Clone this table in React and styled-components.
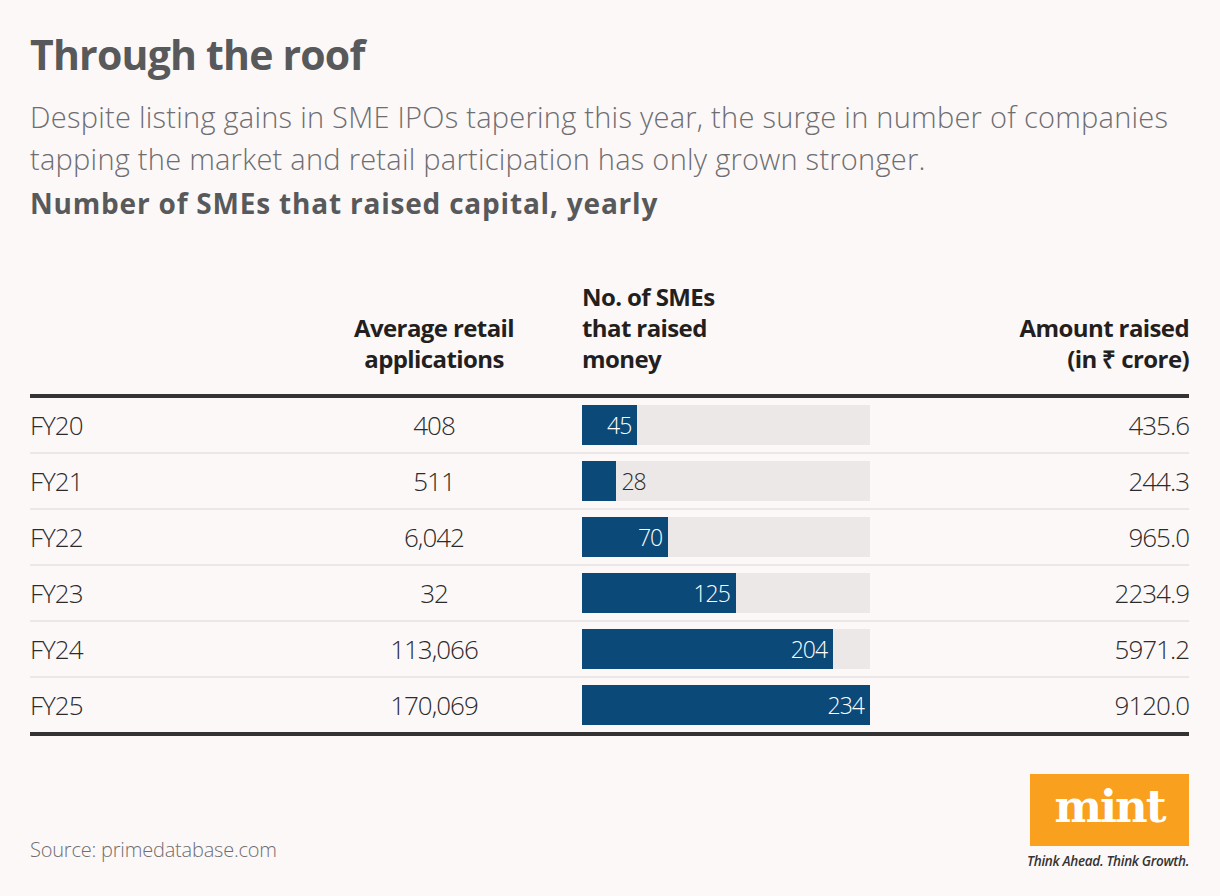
import React from "react";
import styled, { createGlobalStyle } from "styled-components";

const GlobalStyle = createGlobalStyle`
  html, body {
    margin: 0;
    padding: 0;
    background: #fdf8f8;
  }
  body {
    font-family: "Open Sans", "Liberation Sans", sans-serif;
  }
`;

const rows = [
  { year: "FY20", apps: "408", smes: 45, amount: "435.6" },
  { year: "FY21", apps: "511", smes: 28, amount: "244.3" },
  { year: "FY22", apps: "6,042", smes: 70, amount: "965.0" },
  { year: "FY23", apps: "32", smes: 125, amount: "2234.9" },
  { year: "FY24", apps: "113,066", smes: 204, amount: "5971.2" },
  { year: "FY25", apps: "170,069", smes: 234, amount: "9120.0" },
];

const MAX = 234;

const Page = styled.div`
  width: 1220px;
  height: 896px;
  box-sizing: border-box;
  padding: 28px 31px 0 30px;
  display: flex;
  flex-direction: column;
`;

const Title = styled.h1`
  margin: 0;
  font-size: 41px;
  font-weight: 700;
  letter-spacing: -0.8px;
  color: #58595b;
  line-height: 52px;
`;

const Lede = styled.p`
  margin: 16px 0 0;
  font-size: 29px;
  font-weight: 300;
  letter-spacing: 0.25px;
  color: #6d6e71;
  line-height: 42px;
  white-space: nowrap;
`;

const Subhead = styled.h2`
  margin: 2px 0 0;
  font-size: 28px;
  font-weight: 700;
  letter-spacing: 0.8px;
  color: #58595b;
  line-height: 42px;
`;

const Table = styled.div`
  margin-top: 57px;
  display: grid;
  grid-template-columns: 256px 272px 288px 1fr;
  column-gap: 12px;
`;

const Head = styled.div`
  grid-column: 1 / -1;
  display: grid;
  grid-template-columns: subgrid;
  align-items: end;
  padding-bottom: 20px;
  border-bottom: 4px solid #333;
`;

const HeadCell = styled.div`
  font-size: 24px;
  font-weight: 700;
  letter-spacing: -0.6px;
  line-height: 31px;
  color: #231f20;
  text-align: ${(p) => p.$align || "left"};
`;

const Row = styled.div`
  grid-column: 1 / -1;
  display: grid;
  grid-template-columns: subgrid;
  align-items: center;
  height: 54px;
  border-bottom: ${(p) => (p.$last ? "4px solid #333" : "2px solid #ece7e7")};
`;

const Cell = styled.div`
  font-size: 26px;
  font-weight: 300;
  letter-spacing: -1px;
  color: #2b2b2b;
  text-align: ${(p) => p.$align || "left"};
`;

const Track = styled.div`
  height: 40px;
  background: #ede8e8;
  display: flex;
  align-items: center;
`;

const Fill = styled.div`
  height: 100%;
  background: #0b4a78;
  display: flex;
  align-items: center;
  justify-content: flex-end;
  box-sizing: border-box;
  padding-right: 6px;
  flex-shrink: 0;
`;

const BarLabel = styled.span`
  font-size: 23px;
  font-weight: 300;
  letter-spacing: -1px;
  color: ${(p) => (p.$inside ? "#fff" : "#2b2b2b")};
  padding-left: ${(p) => (p.$inside ? "0" : "5px")};
`;

const Footer = styled.div`
  margin-top: auto;
  display: flex;
  justify-content: space-between;
  align-items: flex-end;
  padding-bottom: 26px;
`;

const Source = styled.div`
  font-size: 20px;
  font-weight: 300;
  letter-spacing: -0.2px;
  color: #6d6e71;
  padding-bottom: 7px;
`;

const Logo = styled.div`
  display: flex;
  flex-direction: column;
  align-items: flex-end;
`;

const LogoBox = styled.div`
  width: 159px;
  height: 72px;
  background: #f9a01f;
  display: flex;
  align-items: center;
  justify-content: center;
  color: #fff;
  font-family: "DejaVu Serif", "Liberation Serif", serif;
  font-weight: 700;
  font-size: 45px;
  letter-spacing: -2px;
  line-height: 1;
  padding-bottom: 8px;
  box-sizing: border-box;
`;

const Tagline = styled.div`
  margin-top: 6px;
  font-size: 13.5px;
  font-style: italic;
  font-weight: 600;
  letter-spacing: -0.3px;
  color: #333;
`;

const Bar = ({ value }) => {
  const pct = (value / MAX) * 100;
  const inside = value >= 40;
  return (
    <Track>
      <Fill style={{ width: `${pct}%` }}>
        {inside && <BarLabel $inside>{value}</BarLabel>}
      </Fill>
      {!inside && <BarLabel>{value}</BarLabel>}
    </Track>
  );
};

export default function App() {
  return (
    <>
      <GlobalStyle />
      <Page>
        <Title>Through the roof</Title>
        <Lede>
          Despite listing gains in SME IPOs tapering this year, the surge in number of companies
          <br />
          tapping the market and retail participation has only grown stronger.
        </Lede>
        <Subhead>Number of SMEs that raised capital, yearly</Subhead>

        <Table>
          <Head>
            <HeadCell />
            <HeadCell $align="center">
              Average retail
              <br />
              applications
            </HeadCell>
            <HeadCell>
              No. of SMEs
              <br />
              that raised
              <br />
              money
            </HeadCell>
            <HeadCell $align="right">
              Amount raised
              <br />
              (in ₹ crore)
            </HeadCell>
          </Head>
          {rows.map((r, i) => (
            <Row key={r.year} $last={i === rows.length - 1}>
              <Cell>{r.year}</Cell>
              <Cell $align="center">{r.apps}</Cell>
              <Bar value={r.smes} />
              <Cell $align="right">{r.amount}</Cell>
            </Row>
          ))}
        </Table>

        <Footer>
          <Source>Source: primedatabase.com</Source>
          <Logo>
            <LogoBox>mint</LogoBox>
            <Tagline>Think Ahead. Think Growth.</Tagline>
          </Logo>
        </Footer>
      </Page>
    </>
  );
}
